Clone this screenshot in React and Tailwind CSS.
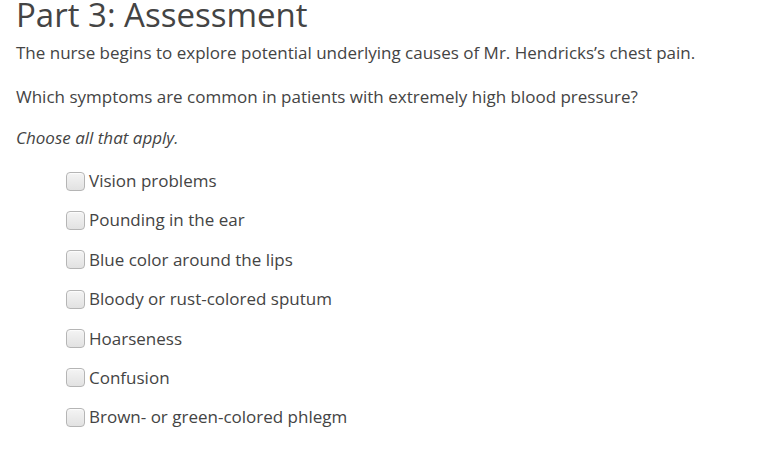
const options = [
  "Vision problems",
  "Pounding in the ear",
  "Blue color around the lips",
  "Bloody or rust-colored sputum",
  "Hoarseness",
  "Confusion",
  "Brown- or green-colored phlegm",
];

export default function App() {
  return (
    <div className="min-h-[468px] bg-white pl-4 text-[#444] font-['Open_Sans',sans-serif]">
      <h1 className="text-[33px] leading-[28px] pt-px font-normal">Part 3: Assessment</h1>
      <p className="mt-[12px] text-[17px] leading-[24px]">
        The nurse begins to explore potential underlying causes of Mr. Hendricks’s chest pain.
      </p>
      <p className="mt-[20px] text-[17px] leading-[24px]">
        Which symptoms are common in patients with extremely high blood pressure?
      </p>
      <p className="mt-[17px] text-[17px] leading-[24px] italic">Choose all that apply.</p>
      <ul className="mt-[19px] pl-[50px] flex flex-col gap-[15.4px]">
        {options.map((o) => (
          <li key={o} className="flex items-center h-[24px]">
            <span className="w-[19px] h-[19px] rounded-[4px] border border-[#b5b5b5] bg-gradient-to-b from-[#f4f4f4] to-[#e2e2e2] shadow-[inset_0_1px_1px_rgba(255,255,255,0.8)]" />
            <span className="ml-[4px] text-[17px] leading-[24px]">{o}</span>
          </li>
        ))}
      </ul>
    </div>
  );
}
